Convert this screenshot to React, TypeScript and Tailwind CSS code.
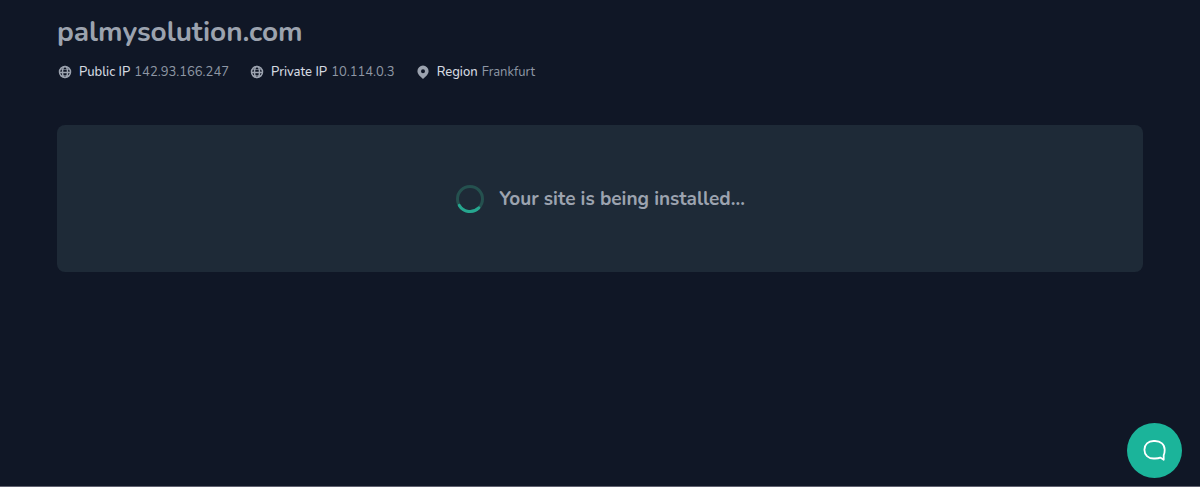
import type { ReactNode } from "react";

function GlobeIcon() {
  return (
    <svg viewBox="0 0 16 16" className="h-4 w-4" fill="none" stroke="currentColor" strokeWidth="1.5" aria-hidden="true">
      <circle cx="8" cy="8" r="5.5" />
      <ellipse cx="8" cy="8" rx="2.5" ry="5.5" />
      <path d="M2.5 8.5h11" />
      <path d="M3.500 5.500h9M3.500 11.500h9" strokeWidth="0.6" />
    </svg>
  );
}

function PinIcon() {
  return (
    <svg viewBox="0 0 20 20" className="h-4 w-4" fill="currentColor" aria-hidden="true">
      <path
        fillRule="evenodd"
        clipRule="evenodd"
        d="M5.05 4.05a7 7 0 1 1 9.9 9.9L10 18.9l-4.95-4.95a7 7 0 0 1 0-9.9ZM10 11.5a2.5 2.5 0 1 0 0-5 2.5 2.5 0 0 0 0 5Z"
      />
    </svg>
  );
}

function Spinner() {
  return (
    <svg viewBox="0 0 30 30" className="h-[30px] w-[30px]" fill="none" strokeWidth="3" role="img" aria-label="Loading">
      <circle cx="15" cy="15" r="12.5" stroke="#25514f" />
      <path d="M4.3 21.4A12.5 12.5 0 0 0 23.8 23.9" stroke="#26a68f" strokeLinecap="round" />
    </svg>
  );
}

function Detail({ icon, label, value }: { icon: ReactNode; label: string; value: string }) {
  return (
    <div className="flex items-center text-[#9ca3af]">
      {icon}
      <dt className="ml-1.5 font-medium text-[#d5dae1]">{label}</dt>
      <dd className="ml-1 text-[#8f97a5]">{value}</dd>
    </div>
  );
}

export default function App() {
  return (
    <div className="min-h-screen border-b border-[#60616f] bg-[#101726] px-[57px] pt-3.5 font-['Nunito','Open_Sans',sans-serif]">
      <header>
        <h1 className="text-[28px] leading-9 font-[750] text-[#9ca3af]">palmysolution.com</h1>
        <dl className="mt-3 flex flex-wrap gap-x-5 text-[13px] leading-5">
          <Detail icon={<GlobeIcon />} label="Public IP" value="142.93.166.247" />
          <Detail icon={<GlobeIcon />} label="Private IP" value="10.114.0.3" />
          <Detail icon={<PinIcon />} label="Region" value="Frankfurt" />
        </dl>
      </header>
      <main className="mt-[43px] flex items-center justify-center gap-3.5 rounded-lg bg-[#1e2a37] px-6 pt-[59px] pb-[58px] text-[#9ca3af]">
        <Spinner />
        <p className="text-[19px] leading-7 font-bold">Your site is being installed...</p>
      </main>
      <button
        type="button"
        aria-label="Open chat"
        className="fixed right-[18px] bottom-[9px] flex h-[55px] w-[55px] items-center justify-center rounded-full bg-[#1bb49a] text-white"
      >
        <svg viewBox="0 0 24 24" className="h-6 w-6" fill="none" stroke="currentColor" strokeWidth="1.8" strokeLinejoin="round" strokeLinecap="round" aria-hidden="true">
          <path d="M12 2h-1.500C5.300 2 1.400 5.500 1.400 10.700s3.900 8.800 9.100 8.800H12c2 0 3.800-.2 5.300-.9l3.400 2.200v-4.600c.7-1.500 1-3.300 1-5.500C21.700 5.500 17.700 2 12 2Z" />
        </svg>
      </button>
    </div>
  );
}
